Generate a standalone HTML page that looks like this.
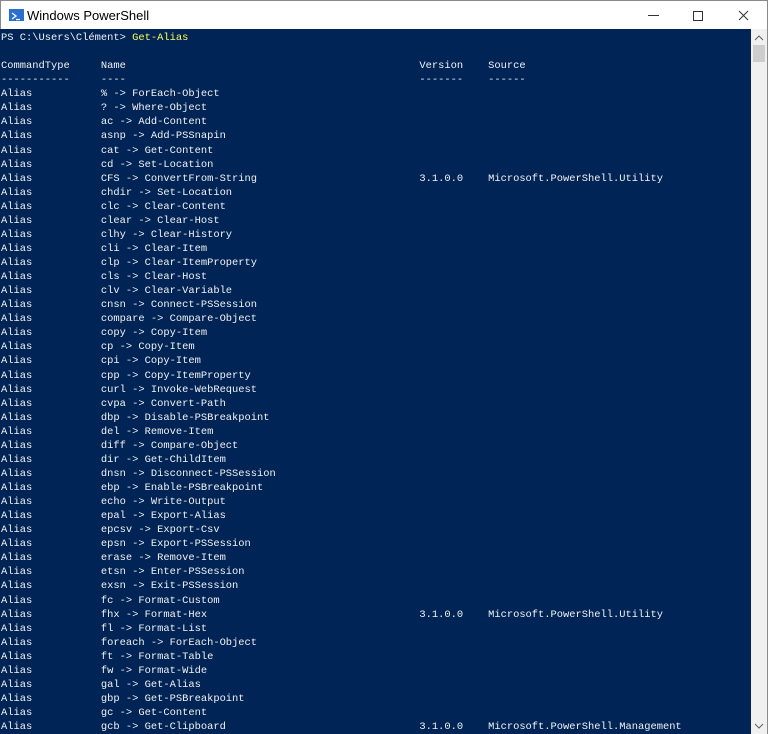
<!DOCTYPE html>
<html><head><meta charset="utf-8"><style>
html,body{margin:0;padding:0;width:768px;height:734px;overflow:hidden;background:#fff}
.win{position:absolute;left:0;top:0;width:766px;height:733px;border:1px solid #8a8a8a;border-bottom:none;background:#fff}
.title{position:absolute;left:26px;top:7px;font:13px "Liberation Sans",sans-serif;color:#000}
.icon{position:absolute;left:8px;top:8px;width:15px;height:12px;background:#2a6fd0}
.con{position:absolute;left:0;top:29px;width:751px;height:705px;background:#012456;overflow:hidden}
pre{margin:0;padding:2px 0 0 1px;font:10.42px/14.07px "Liberation Mono",monospace;color:#f2f2f2;white-space:pre}
.y{color:#fefe54}
.sb{position:absolute;left:751px;top:29px;width:16px;height:705px;background:#f0f0f0}
.th{position:absolute;left:2px;top:16px;width:12px;height:17px;background:#cdcdcd}
</style></head><body>
<div class="win">
<div class="icon"><svg width="15" height="12" viewBox="0 0 15 12"><path d="M3 3 L7 6 L3 9" stroke="#fff" stroke-width="1.3" fill="none"/><path d="M7 9.5 H11" stroke="#fff" stroke-width="1.2"/></svg></div>
<div class="title">Windows PowerShell</div>
<svg style="position:absolute;left:640px;top:8px" width="120" height="16" viewBox="0 0 120 16">
<path d="M7 6.5 H18" stroke="#333" stroke-width="1"/>
<rect x="52.5" y="2.5" width="9" height="9" fill="none" stroke="#333"/>
<path d="M98 2 L107 11 M107 2 L98 11" stroke="#333" stroke-width="1"/>
</svg>
</div>
<div class="con"><pre>PS C:\Users\Clément&gt; <span class="y">Get-Alias</span>

CommandType     Name                                               Version    Source
-----------     ----                                               -------    ------
Alias           % -&gt; ForEach-Object
Alias           ? -&gt; Where-Object
Alias           ac -&gt; Add-Content
Alias           asnp -&gt; Add-PSSnapin
Alias           cat -&gt; Get-Content
Alias           cd -&gt; Set-Location
Alias           CFS -&gt; ConvertFrom-String                          3.1.0.0    Microsoft.PowerShell.Utility
Alias           chdir -&gt; Set-Location
Alias           clc -&gt; Clear-Content
Alias           clear -&gt; Clear-Host
Alias           clhy -&gt; Clear-History
Alias           cli -&gt; Clear-Item
Alias           clp -&gt; Clear-ItemProperty
Alias           cls -&gt; Clear-Host
Alias           clv -&gt; Clear-Variable
Alias           cnsn -&gt; Connect-PSSession
Alias           compare -&gt; Compare-Object
Alias           copy -&gt; Copy-Item
Alias           cp -&gt; Copy-Item
Alias           cpi -&gt; Copy-Item
Alias           cpp -&gt; Copy-ItemProperty
Alias           curl -&gt; Invoke-WebRequest
Alias           cvpa -&gt; Convert-Path
Alias           dbp -&gt; Disable-PSBreakpoint
Alias           del -&gt; Remove-Item
Alias           diff -&gt; Compare-Object
Alias           dir -&gt; Get-ChildItem
Alias           dnsn -&gt; Disconnect-PSSession
Alias           ebp -&gt; Enable-PSBreakpoint
Alias           echo -&gt; Write-Output
Alias           epal -&gt; Export-Alias
Alias           epcsv -&gt; Export-Csv
Alias           epsn -&gt; Export-PSSession
Alias           erase -&gt; Remove-Item
Alias           etsn -&gt; Enter-PSSession
Alias           exsn -&gt; Exit-PSSession
Alias           fc -&gt; Format-Custom
Alias           fhx -&gt; Format-Hex                                  3.1.0.0    Microsoft.PowerShell.Utility
Alias           fl -&gt; Format-List
Alias           foreach -&gt; ForEach-Object
Alias           ft -&gt; Format-Table
Alias           fw -&gt; Format-Wide
Alias           gal -&gt; Get-Alias
Alias           gbp -&gt; Get-PSBreakpoint
Alias           gc -&gt; Get-Content
Alias           gcb -&gt; Get-Clipboard                               3.1.0.0    Microsoft.PowerShell.Management
</pre></div>
<div class="sb"><svg style="position:absolute;left:3px;top:6px" width="10" height="6"><path d="M1 5 L5 1 L9 5" stroke="#606060" fill="none"/></svg><div class="th"></div><svg style="position:absolute;left:3px;top:694px" width="10" height="6"><path d="M1 1 L5 5 L9 1" stroke="#606060" fill="none"/></svg></div>
</body></html>
